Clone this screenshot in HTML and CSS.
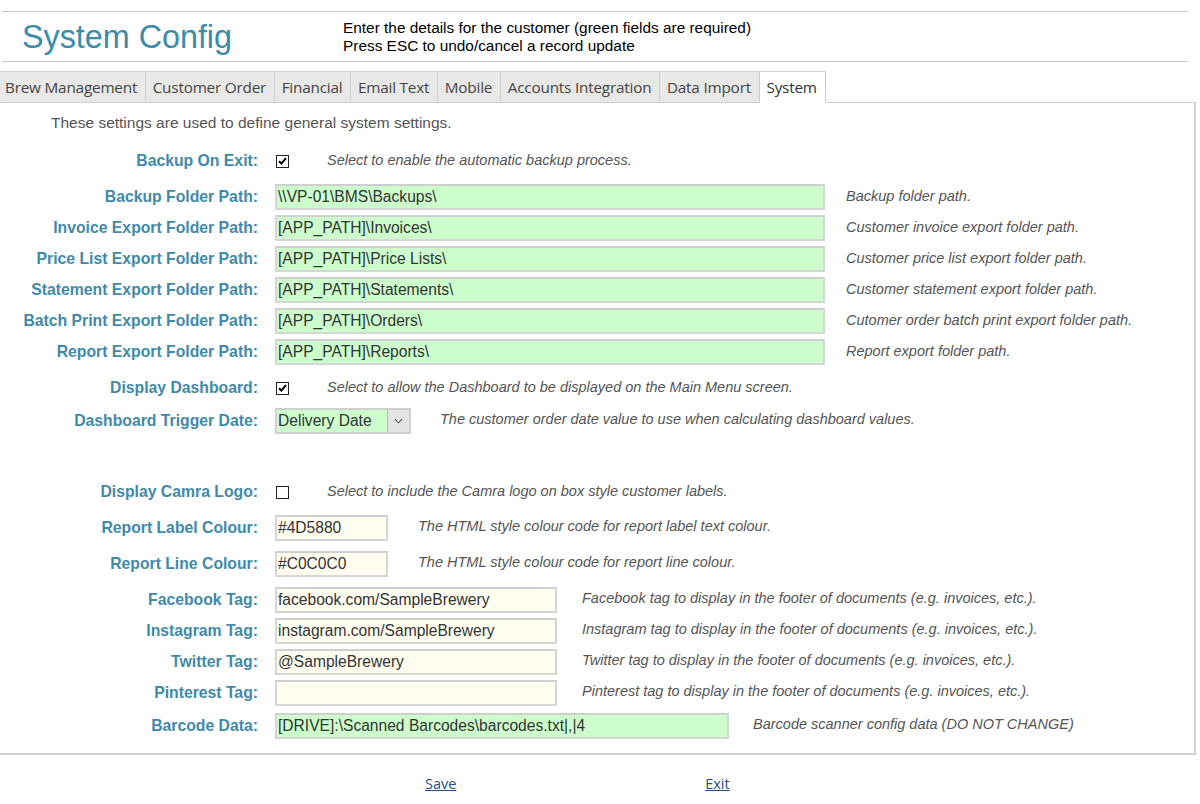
FILE: index.html
```html
<!DOCTYPE html>
<html lang="en">
<head>
    <meta charset="UTF-8">
    <title>System Config</title>
    <link rel="stylesheet" href="styles.css">
</head>
<body>
    <div class="header">
        <h1>System Config</h1>
        <div class="header-note">
            Enter the details for the customer (green fields are required)<br>
            Press ESC to undo/cancel a record update
        </div>
    </div>

    <div class="tabs">
        <div class="tab">Brew Management</div>
        <div class="tab">Customer Order</div>
        <div class="tab">Financial</div>
        <div class="tab">Email Text</div>
        <div class="tab">Mobile</div>
        <div class="tab">Accounts Integration</div>
        <div class="tab">Data Import</div>
        <div class="tab active">System</div>
        <div class="tab-fill"></div>
    </div>

    <div class="panel">
        <p class="intro">These settings are used to define general system settings.</p>

        <div class="row gap-after">
            <label class="label">Backup On Exit:</label>
            <span class="check checked"><svg viewBox="0 0 12 12" width="12" height="12"><path d="M2.2 6.2 L4.8 8.8 L9.8 2.8" fill="none" stroke="#000" stroke-width="2.2"/></svg></span>
            <span class="desc desc-check">Select to enable the automatic backup process.</span>
        </div>
        <div class="row">
            <label class="label">Backup Folder Path:</label>
            <div class="field wide required">\\VP-01\BMS\Backups\</div>
            <span class="desc desc-wide">Backup folder path.</span>
        </div>
        <div class="row">
            <label class="label">Invoice Export Folder Path:</label>
            <div class="field wide required">[APP_PATH]\Invoices\</div>
            <span class="desc desc-wide">Customer invoice export folder path.</span>
        </div>
        <div class="row">
            <label class="label">Price List Export Folder Path:</label>
            <div class="field wide required">[APP_PATH]\Price Lists\</div>
            <span class="desc desc-wide">Customer price list export folder path.</span>
        </div>
        <div class="row">
            <label class="label">Statement Export Folder Path:</label>
            <div class="field wide required">[APP_PATH]\Statements\</div>
            <span class="desc desc-wide">Customer statement export folder path.</span>
        </div>
        <div class="row">
            <label class="label">Batch Print Export Folder Path:</label>
            <div class="field wide required">[APP_PATH]\Orders\</div>
            <span class="desc desc-wide">Cutomer order batch print export folder path.</span>
        </div>
        <div class="row gap-after">
            <label class="label">Report Export Folder Path:</label>
            <div class="field wide required">[APP_PATH]\Reports\</div>
            <span class="desc desc-wide">Report export folder path.</span>
        </div>
        <div class="row gap-small">
            <label class="label">Display Dashboard:</label>
            <span class="check checked"><svg viewBox="0 0 12 12" width="12" height="12"><path d="M2.2 6.2 L4.8 8.8 L9.8 2.8" fill="none" stroke="#000" stroke-width="2.2"/></svg></span>
            <span class="desc desc-check">Select to allow the Dashboard to be displayed on the Main Menu screen.</span>
        </div>
        <div class="row gap-large">
            <label class="label">Dashboard Trigger Date:</label>
            <div class="select required">
                <span class="select-value">Delivery Date</span>
                <span class="select-arrow"><svg viewBox="0 0 10 6" width="9" height="6"><path d="M1 1 L5 5 L9 1" fill="none" stroke="#555" stroke-width="1.2"/></svg></span>
            </div>
            <span class="desc desc-select">The customer order date value to use when calculating dashboard values.</span>
        </div>
        <div class="row gap-after">
            <label class="label">Display Camra Logo:</label>
            <span class="check"></span>
            <span class="desc desc-check">Select to include the Camra logo on box style customer labels.</span>
        </div>
        <div class="row gap-after">
            <label class="label">Report Label Colour:</label>
            <div class="field colour">#4D5880</div>
            <span class="desc desc-colour">The HTML style colour code for report label text colour.</span>
        </div>
        <div class="row gap-after">
            <label class="label">Report Line Colour:</label>
            <div class="field colour">#C0C0C0</div>
            <span class="desc desc-colour">The HTML style colour code for report line colour.</span>
        </div>
        <div class="row">
            <label class="label">Facebook Tag:</label>
            <div class="field tag">facebook.com/SampleBrewery</div>
            <span class="desc desc-tag">Facebook tag to display in the footer of documents (e.g. invoices, etc.).</span>
        </div>
        <div class="row">
            <label class="label">Instagram Tag:</label>
            <div class="field tag">instagram.com/SampleBrewery</div>
            <span class="desc desc-tag">Instagram tag to display in the footer of documents (e.g. invoices, etc.).</span>
        </div>
        <div class="row">
            <label class="label">Twitter Tag:</label>
            <div class="field tag">@SampleBrewery</div>
            <span class="desc desc-tag">Twitter tag to display in the footer of documents (e.g. invoices, etc.).</span>
        </div>
        <div class="row row-pinterest">
            <label class="label">Pinterest Tag:</label>
            <div class="field tag"></div>
            <span class="desc desc-tag">Pinterest tag to display in the footer of documents (e.g. invoices, etc.).</span>
        </div>
        <div class="row">
            <label class="label">Barcode Data:</label>
            <div class="field barcode required">[DRIVE]:\Scanned Barcodes\barcodes.txt|,|4</div>
            <span class="desc desc-barcode">Barcode scanner config data (DO NOT CHANGE)</span>
        </div>
    </div>

    <div class="footer">
        <a href="#" class="save-link">Save</a>
        <a href="#" class="exit-link">Exit</a>
    </div>
</body>
</html>
```

FILE: styles.css
```css
body {
    margin: 0;
    padding: 0;
    background-color: #ffffff;
    font-family: 'Liberation Sans', Arial, sans-serif;
    color: #333;
    width: 1200px;
    height: 804px;
    overflow: hidden;
}

.header {
    display: flex;
    align-items: center;
    margin: 11px 0 0 2px;
    height: 49px;
    border-top: 1px solid #c8c8c8;
    border-bottom: 1px solid #c8c8c8;
    width: 1186px;
}

h1 {
    margin: 0 0 0 20px;
    width: 321px;
    font-size: 32.3px;
    font-weight: normal;
    color: #3a8ca9;
    padding-top: 2px;
}

.header-note {
    font-size: 15.4px;
    line-height: 18px;
    color: #000;
    padding-top: 1px;
}

.tabs {
    display: flex;
    margin-top: 9px;
    height: 32px;
    font-family: 'Open Sans', 'Noto Sans', sans-serif;
    font-size: 15.3px;
}

.tab {
    background-color: #e8e8e6;
    border: 1px solid #cfcfcf;
    border-left: none;
    border-bottom: 1px solid #cfcfcf;
    padding: 0 8px 0 6.5px;
    line-height: 31px;
    color: #444;
    white-space: nowrap;
    letter-spacing: -0.2px;
}

.tab:first-child {
    border-left: 1px solid #e8e8e6;
    padding-left: 4px;
}

.tab.active {
    background-color: #ffffff;
    border-bottom-color: #ffffff;
    color: #333;
}

.tab-fill {
    flex: 1;
    border-bottom: 1px solid #cfcfcf;
    margin-right: 4px;
}

.panel {
    height: 653px;
    margin-right: 4px;
    border-right: 2px solid #d0d0d0;
    border-bottom: 2px solid #d0d0d0;
    box-sizing: border-box;
    margin-top: -1px;
    padding-top: 12px;
}

.intro {
    margin: 0 0 16px 51px;
    font-size: 15.5px;
    color: #555;
}

.row {
    display: flex;
    align-items: center;
    height: 26px;
    margin-bottom: 5px;
}

.row.gap-after {
    margin-bottom: 10px;
}

.row.gap-small {
    margin-bottom: 7px;
}

.row.gap-large {
    margin-bottom: 45px;
}

.row.row-pinterest {
    margin-bottom: 7px;
}

.label {
    width: 258px;
    text-align: right;
    font-weight: bold;
    font-size: 15.75px;
    color: #3f8aab;
    margin-right: 17px;
    flex-shrink: 0;
}

.field {
    box-sizing: border-box;
    height: 26px;
    border: 2px solid #d6d6d6;
    border-top-color: #cfcfcf;
    background-color: #fffdf0;
    padding: 0 0 0 1px;
    font-size: 15.6px;
    line-height: 22px;
    color: #333;
    white-space: nowrap;
    flex-shrink: 0;
}

.field.required {
    background-color: #ccffcc;
}

.wide {
    width: 550px;
}

.colour {
    width: 113px;
}

.tag {
    width: 282px;
}

.barcode {
    width: 454px;
}

.check {
    box-sizing: border-box;
    width: 13px;
    height: 13px;
    border: 1px solid #222;
    background-color: #fff;
    margin-left: 1px;
    display: flex;
    align-items: center;
    justify-content: center;
    flex-shrink: 0;
}

.check svg {
    display: block;
}

.select {
    box-sizing: border-box;
    display: flex;
    width: 136px;
    height: 26px;
    border: 2px solid #d0d0d0;
    background-color: #ccffcc;
    flex-shrink: 0;
}

.select-value {
    flex: 1;
    font-size: 15.6px;
    line-height: 22px;
    padding-left: 1px;
    color: #333;
}

.select-arrow {
    width: 21px;
    background-color: #e4e4e4;
    border-left: 1px solid #b8b8b8;
    display: flex;
    align-items: center;
    justify-content: center;
}

.desc {
    font-style: italic;
    font-size: 14.5px;
    color: #555;
    white-space: nowrap;
    margin-top: -2px;
}

.desc-check {
    margin-left: 38px;
}

.desc-wide {
    margin-left: 21px;
}

.desc-select {
    margin-left: 29px;
    margin-top: -5px;
}

.desc-colour {
    margin-left: 30px;
    margin-top: -5px;
}

.desc-tag {
    margin-left: 25px;
    margin-top: -4px;
}

.desc-barcode {
    margin-left: 24px;
    margin-top: -4px;
}

.footer {
    height: 40px;
    font-family: 'Open Sans', 'Noto Sans', sans-serif;
    font-size: 14.5px;
}

.footer a {
    color: #1f4f85;
    text-decoration: underline;
}

.save-link {
    margin-left: 425px;
    line-height: 57px;
}

.exit-link {
    margin-left: 245px;
    line-height: 57px;
}
```
